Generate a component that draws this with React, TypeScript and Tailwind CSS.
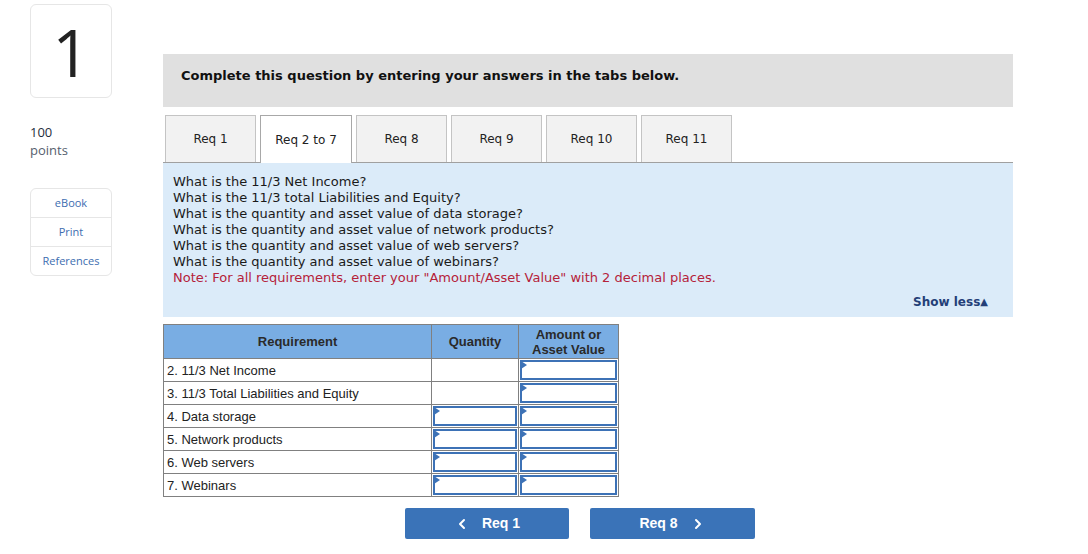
import { ChevronLeft, ChevronRight } from "lucide-react";

const tabs = ["Req 1", "Req 2 to 7", "Req 8", "Req 9", "Req 10", "Req 11"];

const questions = [
  "What is the 11/3 Net Income?",
  "What is the 11/3 total Liabilities and Equity?",
  "What is the quantity and asset value of data storage?",
  "What is the quantity and asset value of network products?",
  "What is the quantity and asset value of web servers?",
  "What is the quantity and asset value of webinars?",
];

const rows = [
  { label: "2. 11/3 Net Income", qty: false },
  { label: "3. 11/3 Total Liabilities and Equity", qty: false },
  { label: "4. Data storage", qty: true },
  { label: "5. Network products", qty: true },
  { label: "6. Web servers", qty: true },
  { label: "7. Webinars", qty: true },
];

function InputCell() {
  return (
    <div className="relative h-full w-full p-px">
      <div className="h-full w-full border-2 border-[#3d72b6] bg-white" />
      <div className="absolute left-[2px] top-[2px] h-0 w-0 border-y-[4px] border-l-[6px] border-y-transparent border-l-[#3d72b6]" />
    </div>
  );
}

export default function App() {
  return (
    <div className="flex h-[554px] w-[1088px] bg-white pl-[30px]">
      {/* left rail */}
      <div className="w-[82px] pt-[4px] font-['Open_Sans',sans-serif]">
        <div className="flex h-[94px] items-center justify-center rounded-md border border-[#e6e6e6]">
          <span className="font-['Open_Sans',sans-serif] text-[66px] font-normal leading-none text-[#222]">1</span>
        </div>
        <div className="mt-[25px] text-[13px] leading-[18px]">
          <div className="text-[#1f2d3d]">100</div>
          <div className="text-[#55606e]">points</div>
        </div>
        <div className="mt-[29px] flex flex-col rounded-md border border-[#e6e6e6] text-[11px] text-[#3d6db0]">
          <div className="flex h-[29px] items-center justify-center border-b border-[#e6e6e6]">eBook</div>
          <div className="flex h-[29px] items-center justify-center border-b border-[#e6e6e6]">Print</div>
          <div className="flex h-[28px] items-center justify-center">References</div>
        </div>
      </div>

      {/* main column */}
      <div className="ml-[51px] w-[850px] pt-[54px]">
        <div className="h-[53px] bg-[#e0e0e0] pl-[18px] pt-[14px] font-['DejaVu_Sans',sans-serif] text-[13px] font-bold leading-[16px] text-[#111]">
          Complete this question by entering your answers in the tabs below.
        </div>

        <div className="mt-[8px] flex gap-[4px] border-b border-[#a0a0a0] pl-[2px]">
          {tabs.map((t, i) => (
            <div
              key={t}
              className={
                i === 1
                  ? "-mb-px flex h-[48px] w-[92px] items-center justify-center border border-b-0 border-[#a8a8a8] bg-white font-['DejaVu_Sans',sans-serif] text-[12px] text-[#222]"
                  : "flex h-[47px] w-[91px] items-center justify-center border border-b-0 border-[#c4c4c4] bg-[#f2f2f2] font-['DejaVu_Sans',sans-serif] text-[12px] text-[#222]"
              }
            >
              {t}
            </div>
          ))}
        </div>

        <div className="flex h-[154px] flex-col bg-[#dbebf9] pl-[10px] pr-[25px] pt-[11px] font-['DejaVu_Sans',sans-serif] text-[13px] leading-[16px]">
          {questions.map((q) => (
            <div key={q} className="text-[#1a1a1a]">
              {q}
            </div>
          ))}
          <div className="text-[#b5223a]">
            Note: For all requirements, enter your "Amount/Asset Value" with 2 decimal places.
          </div>
          <div className="mt-[8px] flex items-center justify-end text-[12px] font-bold text-[#243f78]">
            Show less<span className="text-[10px]">▲</span>
          </div>
        </div>

        <table className="mt-[7px] w-[456px] border-collapse font-['Liberation_Sans',sans-serif] text-[13px] text-[#222]">
          <thead>
            <tr className="h-[34px] bg-[#79ade3] font-bold text-[#2a2a2a]">
              <th className="w-[268px] border border-[#808080] font-bold">Requirement</th>
              <th className="w-[87px] border border-[#808080] font-bold">Quantity</th>
              <th className="border border-[#808080] font-bold leading-[15px]">
                Amount or
                <br />
                Asset Value
              </th>
            </tr>
          </thead>
          <tbody>
            {rows.map((r) => (
              <tr key={r.label} className="h-[23px]">
                <td className="border border-[#808080] px-[3px] pt-[1px] leading-[20px]">{r.label}</td>
                <td className="h-[23px] border border-[#808080] p-0">{r.qty ? <InputCell /> : null}</td>
                <td className="h-[23px] border border-[#808080] p-0">
                  <InputCell />
                </td>
              </tr>
            ))}
          </tbody>
        </table>

        <div className="mt-[11px] flex gap-[21px] pl-[242px] font-['Liberation_Sans',sans-serif] text-[14px] font-bold text-white">
          <button className="flex h-[31px] w-[164px] items-center justify-center gap-[12px] rounded-[2px] bg-[#3a73b8]">
            <ChevronLeft className="h-[16px] w-[16px]" strokeWidth={3} />
            Req 1
          </button>
          <button className="flex h-[31px] w-[165px] items-center justify-center gap-[12px] rounded-[2px] bg-[#3a73b8]">
            Req 8
            <ChevronRight className="h-[16px] w-[16px]" strokeWidth={3} />
          </button>
        </div>
      </div>
    </div>
  );
}
